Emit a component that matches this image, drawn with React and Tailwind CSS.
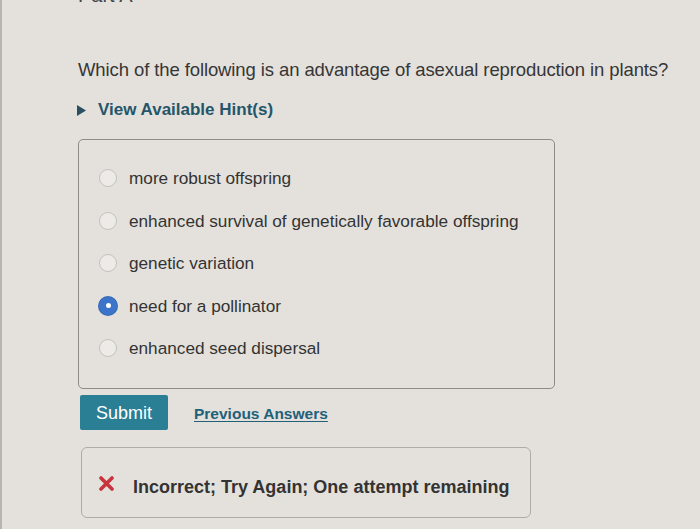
const options = [
  "more robust offspring",
  "enhanced survival of genetically favorable offspring",
  "genetic variation",
  "need for a pollinator",
  "enhanced seed dispersal",
];

const selected = 3;

function Radio({ checked }) {
  if (checked) {
    return (
      <span className="flex items-center justify-center w-[18px] h-[18px] rounded-full bg-[#3b74c9] shadow-[0_0_0_1px_#3568b5]">
        <span className="w-[5px] h-[5px] rounded-full bg-white"></span>
      </span>
    );
  }
  return (
    <span className="block w-[18px] h-[18px] rounded-full border border-[#c4c2bd] bg-[#ecebe8]"></span>
  );
}

export default function App() {
  return (
    <div
      className="w-[700px] h-[529px] overflow-hidden bg-[#e4e1dc] border-l-2 border-[#b9b6b1] text-[#363636]"
      style={{ fontFamily: '"Liberation Sans", Arial, sans-serif' }}
    >
      <div className="pl-[76px]">
        <div className="h-[5px] overflow-hidden">
          <div className="-mt-[15px] text-[20px] leading-[20px] text-[#444]">Part A</div>
        </div>

        <p className="mt-[55px] text-[18.5px] leading-[20px] tracking-[-0.1px]">
          Which of the following is an advantage of asexual reproduction in plants?
        </p>

        <div className="mt-[20px] flex items-center gap-[12px] text-[#24566a] font-bold text-[17px] leading-[20px]">
          <svg width="9" height="11" viewBox="0 0 9 11" className="ml-[-1px]">
            <path d="M0 0 L9 5.5 L0 11 Z" fill="#2a4f62" />
          </svg>
          <span>View Available Hint(s)</span>
        </div>

        <div className="mt-[19px] w-[477px] h-[250px] rounded-[5px] border border-[#8e8c88] pt-[17px] pl-[20px]">
          {options.map((opt, i) => (
            <div key={opt} className="flex items-center h-[42.5px]">
              <Radio checked={i === selected} />
              <span className="ml-[12px] text-[17.2px] leading-[20px] text-[#333]">{opt}</span>
            </div>
          ))}
        </div>

        <div className="mt-[6px] flex items-center">
          <button className="ml-[2px] w-[88px] h-[35px] rounded-[2px] bg-[#2a7f95] text-white text-[18px] leading-[20px]">
            Submit
          </button>
          <a className="ml-[26px] mt-[2px] font-bold text-[15.5px] leading-[20px] text-[#22607a] underline underline-offset-[2px]">
            Previous Answers
          </a>
        </div>

        <div className="mt-[17px] ml-[3px] w-[450px] h-[71px] rounded-[6px] border border-[#aeaca8] flex items-center pl-[17px] pt-[8px]">
          <svg width="15" height="15" viewBox="0 0 15 15" className="-mt-[6px]">
            <path d="M2 2 L13 13 M13 2 L2 13" stroke="#c8343d" strokeWidth="3.6" strokeLinecap="round" />
          </svg>
          <span className="ml-[19px] font-bold text-[18px] leading-[20px] text-[#333]">
            Incorrect; Try Again; One attempt remaining
          </span>
        </div>
      </div>
    </div>
  );
}
